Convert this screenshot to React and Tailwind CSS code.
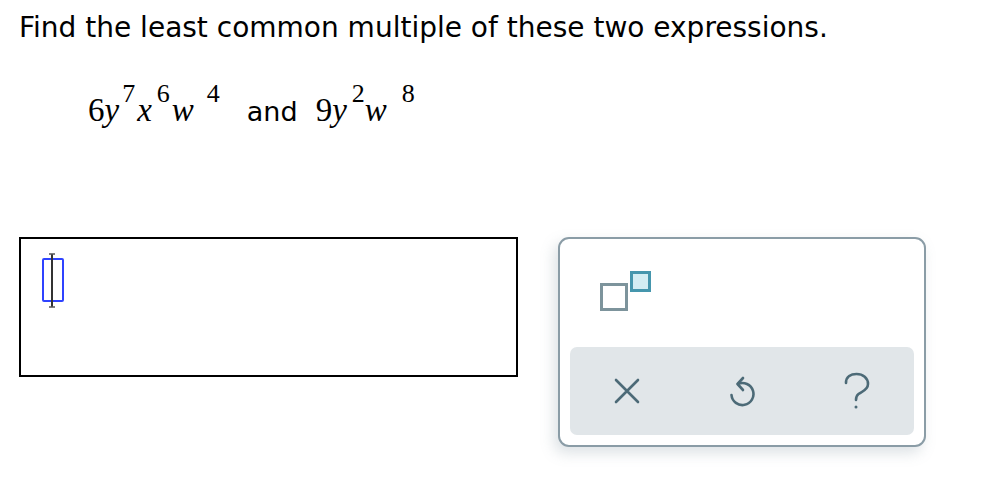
import React from 'react';

const serif = "font-[family-name:'Liberation_Serif','Times_New_Roman',serif]";

const Sup = ({ children, className = '' }) => (
  <span className={`relative -top-[19px] text-[26px] not-italic ${className}`}>{children}</span>
);

const Cursor = () => (
  <svg width="24" height="56" viewBox="0 0 24 56" fill="none">
    <rect x="2" y="6" width="20" height="42" rx="1" stroke="#2f43ff" strokeWidth="2" />
    <line x1="11" y1="1" x2="11" y2="54" stroke="#333" strokeWidth="2" />
    <path d="M8 1 L14 1 M8 54 L14 54" stroke="#555" strokeWidth="1.6" />
  </svg>
);

const App = () => {
  return (
    <div className="w-[996px] h-[480px] bg-white flex flex-col font-[family-name:'DejaVu_Sans',Verdana,sans-serif] text-black">
      <div className="pl-[19px] pt-[12px] text-[28px] leading-[32px]">
        Find the least common multiple of these two expressions.
      </div>

      <div className="pl-[88px] pt-[46px] h-[86px] flex items-baseline text-[33px] leading-[40px]">
        <span className={serif}>
          6<i>y</i><Sup className="ml-[3px]">7</Sup><i className="ml-[2px]">x</i><Sup className="ml-[5px]">6</Sup>
          <i className="ml-[2px]">w</i><Sup className="ml-[13px]">4</Sup>
        </span>
        <span className="ml-[27px] text-[27px]">and</span>
        <span className={`ml-[18px] ${serif}`}>
          9<i>y</i><Sup className="ml-[5px]">2</Sup><i className="ml-0">w</i><Sup className="ml-[15px]">8</Sup>
        </span>
      </div>

      <div className="flex items-start mt-[107px] pl-[19px]">
        <div className="w-[499px] h-[140px] border-2 border-black pl-[20px] pt-[14px]">
          <Cursor />
        </div>

        <div className="ml-[40px] w-[368px] h-[210px] border-2 border-[#8a9ca6] rounded-[11px] bg-white shadow-[-4px_6px_14px_rgba(120,140,150,0.25)] px-[10px] pt-[32px] flex flex-col">
          <div className="flex items-start h-[42px] ml-[30px]">
            <div className="mt-[12px] w-[28px] h-[28px] border-[3px] border-[#7d949c] bg-white" />
            <div className="ml-[2px] w-[21px] h-[21px] border-[3px] border-[#4596ad] bg-[#d3edf3]" />
          </div>
          <div className="mt-[34px] h-[88px] bg-[#e1e6e9] rounded-[7px] flex items-center text-[#4c6a77]">
            <div className="flex-1 flex justify-center">
              <svg width="26" height="26" viewBox="0 0 26 26" fill="none" stroke="currentColor" strokeWidth="2.6" strokeLinecap="round">
                <path d="M2 2 L24 24 M24 2 L2 24" />
              </svg>
            </div>
            <div className="flex-1 flex justify-center">
              <svg width="30" height="32" viewBox="0 0 30 32" fill="none" stroke="currentColor" strokeWidth="2.6" strokeLinecap="round" strokeLinejoin="round">
                <path d="M11 9 A 11 11 0 1 1 4.5 20" />
                <path d="M16 3 L 10.5 9 L 16 15" />
              </svg>
            </div>
            <div className="flex-1 flex justify-center">
              <svg width="28" height="38" viewBox="0 0 28 38" fill="none" stroke="currentColor" strokeWidth="2.6" strokeLinecap="round">
                <path d="M3 11 C 3 4.5 8 2 13.5 2 C 20 2 25 6 25 12 C 25 18 19 19.5 15.5 22 C 13.5 23.5 13 25 13 28" />
                <circle cx="13" cy="35" r="1.5" fill="currentColor" stroke="none" />
              </svg>
            </div>
          </div>
        </div>
      </div>
    </div>
  );
};

export default App;
